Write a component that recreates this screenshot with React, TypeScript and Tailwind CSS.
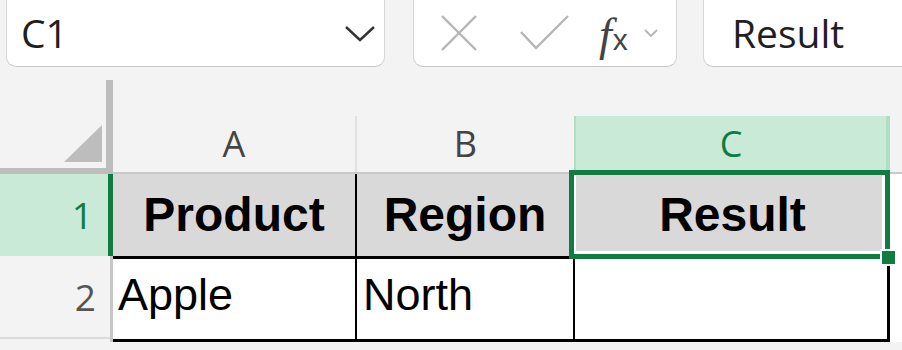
const ui = "font-['Open_Sans',sans-serif]";
const cell = "font-['Liberation_Sans',Arial,sans-serif] text-black";

const App = () => {
  return (
    <div className={`w-[902px] h-[350px] overflow-hidden bg-[#f3f3f3] ${ui}`}>
      {/* Toolbar */}
      <div className="flex h-[67px] pl-[6px]">
        {/* Name box */}
        <div className="w-[379px] flex items-center justify-between pl-[14px] pr-[8px] bg-white border border-t-0 border-[#d6d6d6] border-b-[#c6c6c6] rounded-b-[10px]">
          <span className="text-[39px] leading-none text-[#1f1f1f] pb-[2px]">C1</span>
          <svg width="32" height="18" viewBox="0 0 32 18" fill="none">
            <polyline points="2,3 16,16 30,3" stroke="#333" strokeWidth="2.4" />
          </svg>
        </div>

        {/* Formula buttons */}
        <div className="ml-[28px] w-[264px] flex items-center bg-white border border-t-0 border-[#d6d6d6] border-b-[#c6c6c6] rounded-b-[10px]">
          <svg className="ml-[26px]" width="38" height="38" viewBox="0 0 38 38" fill="none">
            <path d="M2 2L36 36M36 2L2 36" stroke="#b5b5b5" strokeWidth="2.4" />
          </svg>
          <svg className="ml-[42px]" width="50" height="36" viewBox="0 0 50 36" fill="none">
            <polyline points="1,17 16,33 48,1" stroke="#b5b5b5" strokeWidth="2.4" />
          </svg>
          <span className="ml-[29px] flex items-baseline text-[#444] leading-none pt-[4px]">
            <span className="italic text-[46px] font-['Liberation_Serif',serif]">f</span>
            <span className="text-[30px] font-['Liberation_Sans',sans-serif] ml-[1px]">x</span>
          </span>
          <svg className="ml-[16px]" width="14" height="9" viewBox="0 0 14 9" fill="none">
            <polyline points="1,1 7,7 13,1" stroke="#b5b5b5" strokeWidth="1.8" />
          </svg>
        </div>

        {/* Formula bar */}
        <div className="ml-[26px] flex-1 flex items-center pl-[28px] bg-white border border-t-0 border-r-0 border-[#d6d6d6] border-b-[#c6c6c6] rounded-bl-[10px]">
          <span className="text-[39px] leading-none text-[#1f1f1f] pb-[2px]">Result</span>
        </div>
      </div>

      {/* Grid */}
      <div className="relative mt-[13px]">
        {/* Column headers */}
        <div className="flex h-[94px]">
          <div className="w-[113px] shrink-0 flex items-end justify-end pr-[4px] pb-[6px] border-r-[7px] border-b-[6px] border-[#bdbdbd]">
            <svg width="38" height="37" viewBox="0 0 38 37">
              <polygon points="38,0 38,37 0,37" fill="#bdbdbd" />
            </svg>
          </div>
          <div className="flex-1 flex flex-col">
            <div className="h-[36px]" />
            <div className="flex flex-1 border-b-2 border-[#c9c9c9] text-[36px] text-[#444]">
              <div className="w-[244px] flex items-center justify-center border-r-2 border-[#e0e0e0]">A</div>
              <div className="w-[217px] flex items-center justify-center">B</div>
              <div className="w-[316px] flex items-center justify-center bg-[#c8ead7] border-l-2 border-r-[4px] border-[#aedfc3] text-[#107c41]">
                C
              </div>
              <div className="flex-1" />
            </div>
          </div>
        </div>

        {/* Row 1 */}
        <div className="flex h-[82px]">
          <div className="w-[113px] shrink-0 flex items-center justify-end pr-[15px] bg-[#c8ead7] border-r-[5px] border-[#107c41] text-[37px] text-[#107c41]">
            1
          </div>
          <div className={`w-[244px] flex items-center justify-center bg-[#d9d9d9] border-r-2 border-black text-[48px] font-bold ${cell}`}>
            Product
          </div>
          <div className={`w-[218px] flex items-center justify-center bg-[#d9d9d9] border-r-2 border-black text-[48px] font-bold ${cell}`}>
            Region
          </div>
          <div className={`w-[315px] flex items-center justify-center bg-[#d9d9d9] text-[48px] font-bold ${cell}`}>
            Result
          </div>
          <div className="flex-1 bg-white" />
        </div>

        {/* Row 2 */}
        <div className="flex h-[86px]">
          <div className="w-[113px] shrink-0 flex flex-col border-r-[3px] border-[#c6c6c6]">
            <div className="h-[83px] flex items-center justify-end pr-[14px] border-b-2 border-[#dadada] text-[37px] text-[#555]">
              2
            </div>
          </div>
          <div className="flex-1 flex bg-white">
            <div className="flex h-[86px] border-y-[3px] border-black">
              <div className={`w-[244px] flex items-center pl-[5px] pb-[8px] border-r-2 border-black text-[45px] ${cell}`}>
                Apple
              </div>
              <div className={`w-[218px] flex items-center pl-[6px] pb-[8px] border-r-2 border-black text-[45px] ${cell}`}>
                North
              </div>
              <div className="w-[315px] border-r-[3px] border-black" />
            </div>
          </div>
        </div>

        {/* Selection on C1 */}
        <div className="absolute left-[569px] top-[90px] w-[321px] h-[89px] border-[5px] border-[#107c41] shadow-[inset_2px_0_0_#fff,inset_-3px_0_0_#fff,inset_0_-3px_0_#fff]" />
        <div className="absolute left-[880px] top-[169px] w-[17px] h-[17px] bg-[#107c41] border-2 border-white" />
      </div>
    </div>
  );
};

export default App;
